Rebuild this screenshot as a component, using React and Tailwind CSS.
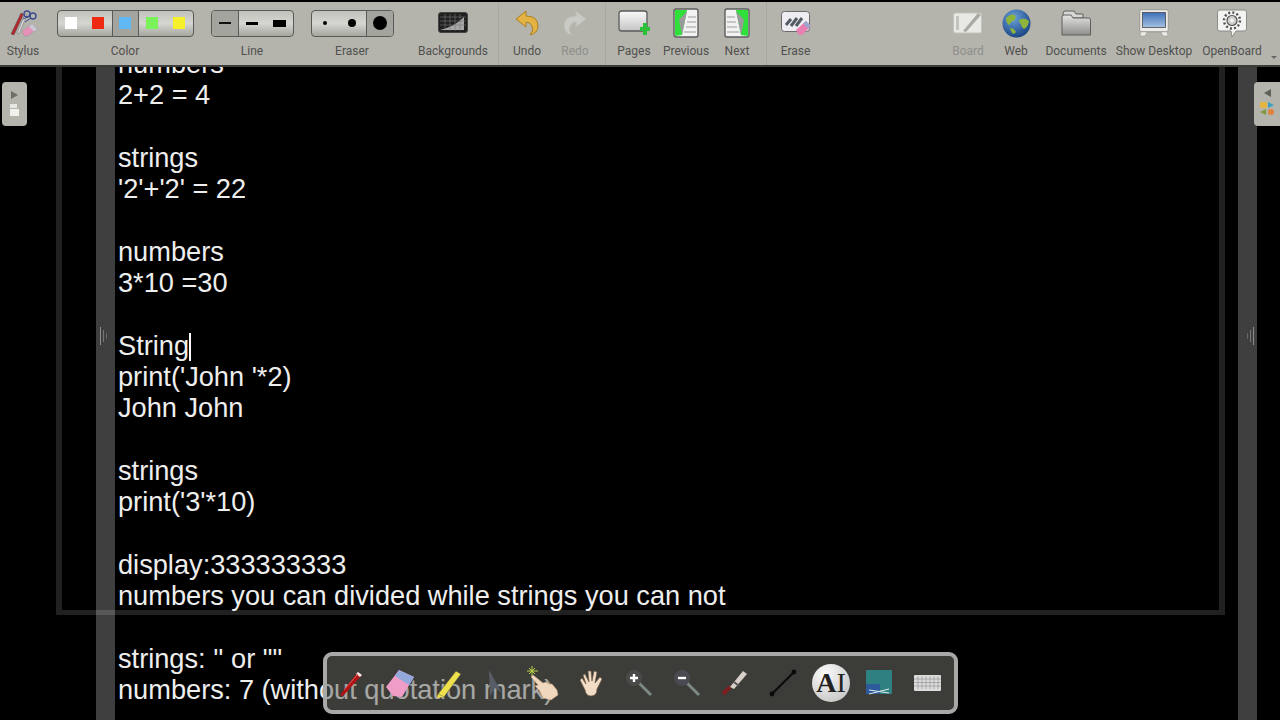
const lines = [
  "numbers", "2+2 = 4", "", "strings", "'2'+'2' = 22", "", "numbers", "3*10 =30", "",
  "String", "print('John '*2)", "John John", "", "strings", "print('3'*10)", "",
  "display:333333333", "numbers you can divided while strings you can not", "",
  "strings: '' or \"\"", "numbers: 7 (without quotation mark)",
];

function StylusIcon() {
  return (
    <svg width="30" height="30" viewBox="0 0 30 30">
      <path d="M3 26 L13 5 L15.5 6.2 L6 27 Z" fill="#b3262a" stroke="#555" strokeWidth="0.5" />
      <path d="M9 25 L17 6 L19 7 L11 26 Z" fill="#d8d8d8" stroke="#666" strokeWidth="0.5" />
      <circle cx="19" cy="6" r="3" fill="none" stroke="#3c4d8c" strokeWidth="1.4" />
      <circle cx="25" cy="8" r="3" fill="none" stroke="#3c4d8c" strokeWidth="1.4" />
      <path d="M15 11 L21 8 M17 14 L23 10" stroke="#3c4d8c" strokeWidth="1" />
      <path d="M14 23 L24 16 L29 21 L20 28 L16 28 Z" fill="#e591b8" stroke="#999" strokeWidth="0.5" />
      <path d="M24 16 L29 21 L26 23.5 L21 18.5 Z" fill="#c9c9d6" />
    </svg>
  );
}

function BackgroundsIcon() {
  return (
    <svg width="30" height="22" viewBox="0 0 30 22">
      <rect x="0.5" y="0.5" width="29" height="20" rx="2.5" fill="#202020" stroke="#444" />
      <path d="M2 18 L26 18 L26 5 Q18 14 2 18 Z" fill="#a8a8a8" />
      <path d="M2 5 H28 M2 9 H28 M2 13 H28 M7 2 V19 M12 2 V19 M17 2 V19 M22 2 V19" stroke="#777" strokeWidth="0.6" />
    </svg>
  );
}

function ArrowIcon({ fill, stroke, flip }) {
  return (
    <svg width="24" height="26" viewBox="0 0 24 26" className={flip ? "-scale-x-100" : ""}>
      <path d="M1 9 L11 1 L11 6 Q23 6 23 16 Q23 23 15 25 Q19 21 17 16 Q15 12 11 12 L11 17 Z" fill={fill} stroke={stroke} strokeWidth="1" strokeLinejoin="round" />
    </svg>
  );
}

function PagesIcon() {
  return (
    <svg width="32" height="26" viewBox="0 0 32 26">
      <defs>
        <linearGradient id="pg" x1="0" x2="0" y1="0" y2="1">
          <stop offset="0" stopColor="#fafafa" />
          <stop offset="1" stopColor="#c4c4c4" />
        </linearGradient>
      </defs>
      <rect x="1" y="1" width="28" height="20" rx="2.5" fill="url(#pg)" stroke="#5a5a5a" strokeWidth="1.3" />
      <path d="M25 13 h4 v4 h3 v4 h-3 v4 h-4 v-4 h-3 v-4 h3 Z" fill="#2bc23a" />
    </svg>
  );
}

function PageTurnIcon({ flip }) {
  return (
    <svg width="26" height="30" viewBox="0 0 26 30" className={flip ? "-scale-x-100" : ""}>
      <rect x="1" y="1" width="24" height="28" rx="2" fill="#f2f2f2" stroke="#5c5c5c" strokeWidth="1.4" />
      <path d="M2 2 H14 L9 27 L2 28 Z" fill="#2fe03a" />
      <path d="M14 3 L9 27 L6 12 Z" fill="#9a9a9a" />
      <path d="M15 9 H23 M14 14 H23 M13 19 H23 M11 24 H23" stroke="#9b9b9b" strokeWidth="1" />
    </svg>
  );
}

function EraseIcon() {
  return (
    <svg width="30" height="24" viewBox="0 0 30 24">
      <rect x="0.5" y="0.5" width="28" height="20" rx="3" fill="#eeeef2" stroke="#6a6a6a" />
      <path d="M5 14 L10 8 M10 15 L16 7 M15 15 L21 7" stroke="#555c66" strokeWidth="3" />
      <path d="M15 19 L25 10 L30 15 L21 24 L18 24 Z" fill="#e77fb0" />
      <path d="M25 10 L30 15 L27 17.5 L22 12.5 Z" fill="#9aa7cf" />
    </svg>
  );
}

function BoardIcon() {
  return (
    <svg width="30" height="22" viewBox="0 0 30 22">
      <rect x="0.5" y="1" width="28" height="20" rx="2" fill="#e8e8e4" stroke="#c4c4be" />
      <rect x="3" y="4" width="3" height="14" fill="#c4c4be" />
      <path d="M10 19 L25 1 L28 3 L13 20 Z" fill="#a9a9a4" />
    </svg>
  );
}

function GlobeIcon() {
  return (
    <svg width="29" height="29" viewBox="0 0 29 29">
      <defs>
        <radialGradient id="gl" cx="0.4" cy="0.3" r="0.8">
          <stop offset="0" stopColor="#6aa2dc" />
          <stop offset="1" stopColor="#123a78" />
        </radialGradient>
      </defs>
      <circle cx="14.5" cy="14.5" r="14" fill="url(#gl)" />
      <path d="M4 9 Q9 4 13 6 Q15 10 11 12 Q8 13 8 16 Q4 15 4 9 Z M17 11 Q23 8 27 12 Q26 18 22 20 Q19 18 19 15 Q17 14 17 11 Z M8 19 Q12 19 14 23 Q12 26 10 24 Z" fill="#8fb43c" />
    </svg>
  );
}

function FolderIcon() {
  return (
    <svg width="30" height="26" viewBox="0 0 30 26">
      <defs>
        <linearGradient id="fd" x1="0" x2="0" y1="0" y2="1">
          <stop offset="0" stopColor="#e4e4e2" />
          <stop offset="1" stopColor="#8e8e8c" />
        </linearGradient>
      </defs>
      <path d="M2 4 Q2 1 4 1 H13 L15 4 H22 V8 H2 Z" fill="#d6d6d4" stroke="#5e5e5e" />
      <path d="M1 25 V7 Q1 5 3 5 H10 L12 8 H28 Q29.5 8 29.5 10 V25 Z" fill="url(#fd)" stroke="#5e5e5e" />
    </svg>
  );
}

function DesktopIcon() {
  return (
    <svg width="30" height="28" viewBox="0 0 30 28">
      <defs>
        <linearGradient id="ds" x1="0" x2="0" y1="0" y2="1">
          <stop offset="0" stopColor="#3d70b8" />
          <stop offset="1" stopColor="#a5c2e2" />
        </linearGradient>
      </defs>
      <path d="M2 22 L1 27 H6 L8 23 H22 L24 27 H29 L28 22 Z" fill="#ecebe8" stroke="#9a9a96" strokeWidth="0.6" />
      <rect x="0.7" y="0.7" width="28.6" height="22" rx="2" fill="#ecebe8" stroke="#9a9a96" />
      <rect x="3.5" y="3.5" width="23" height="15" fill="url(#ds)" stroke="#4a4a4a" strokeWidth="0.8" />
    </svg>
  );
}

function OpenBoardIcon() {
  return (
    <svg width="30" height="29" viewBox="0 0 30 29">
      <path d="M3 1 H27 Q29.5 1 29.5 3 V20 Q29.5 22 27 22 H19 L15 28 L14 22 H3 Q0.5 22 0.5 20 V3 Q0.5 1 3 1 Z" fill="#f3f3f1" stroke="#8b8b87" />
      <circle cx="15" cy="11.5" r="5" fill="#cfcfcd" stroke="#555" strokeWidth="1.2" />
      <circle cx="15" cy="11.5" r="8" fill="none" stroke="#555" strokeWidth="2.4" strokeDasharray="2 2.2" />
      <circle cx="15" cy="11.5" r="2" fill="#f3f3f1" />
    </svg>
  );
}

function ToolItem({ label, width, muted, children }) {
  return (
    <div className="flex flex-col items-center shrink-0 pt-[1px]" style={{ width }}>
      <div className="h-[40px] flex items-center justify-center">{children}</div>
      <span className={"text-[12px] leading-[16px] whitespace-nowrap " + (muted ? "text-[#8f8f8b]" : "text-[#50504e]")}>{label}</span>
    </div>
  );
}

function Segmented({ cells, selected }) {
  return (
    <div className="flex h-[27px] rounded-[4px] border border-[#5a5a58] overflow-hidden bg-gradient-to-b from-[#c2c2bc] via-[#d6d6d0] to-[#a6a6a0]">
      {cells.map((cell, i) => (
        <div
          key={i}
          className={"w-[27px] flex items-center justify-center " +
            (selected === i ? "bg-[#a4a49e] " : "") +
            (selected === i && i > 0 ? "border-l border-[#5a5a58] " : "") +
            (selected === i && i < cells.length - 1 ? "border-r border-[#5a5a58]" : "")}
        >
          {cell}
        </div>
      ))}
    </div>
  );
}

function Toolbar() {
  return (
    <div className="mt-[2px] h-[65px] shrink-0 flex bg-[#b4b4ad] border-b-2 border-[#3c3c3a] relative">
      <ToolItem label="Stylus" width={46}><StylusIcon /></ToolItem>
      <ToolItem label="Color" width={158}>
        <Segmented selected={2} cells={[
          <div className="w-[12px] h-[12px] bg-white" />,
          <div className="w-[12px] h-[12px] bg-[#ef2a12]" />,
          <div className="w-[12px] h-[12px] bg-[#62b8f2]" />,
          <div className="w-[12px] h-[12px] bg-[#7cf25a]" />,
          <div className="w-[12px] h-[12px] bg-[#f6f02a]" />,
        ]} />
      </ToolItem>
      <ToolItem label="Line" width={96}>
        <Segmented selected={0} cells={[
          <div className="w-[12px] h-[2px] bg-[#111]" />,
          <div className="w-[12px] h-[3px] bg-black" />,
          <div className="w-[13px] h-[7px] bg-black" />,
        ]} />
      </ToolItem>
      <ToolItem label="Eraser" width={104}>
        <Segmented selected={2} cells={[
          <div className="w-[4px] h-[4px] rounded-full bg-black" />,
          <div className="w-[8px] h-[8px] rounded-full bg-black" />,
          <div className="w-[14px] h-[14px] rounded-full bg-black" />,
        ]} />
      </ToolItem>
      <div className="w-[4px]" />
      <ToolItem label="Backgrounds" width={90}><BackgroundsIcon /></ToolItem>
      <div className="h-full border-l border-dotted border-[#9c9c96]" />
      <ToolItem label="Undo" width={56}><ArrowIcon fill="#e3b343" stroke="#a87f22" /></ToolItem>
      <ToolItem label="Redo" width={40} muted><ArrowIcon fill="#c9c9c5" stroke="#bdbdb8" flip /></ToolItem>
      <div className="w-[10px]" />
      <div className="h-full border-l border-dotted border-[#9c9c96]" />
      <ToolItem label="Pages" width={56}><PagesIcon /></ToolItem>
      <ToolItem label="Previous" width={48}><PageTurnIcon /></ToolItem>
      <ToolItem label="Next" width={54}><PageTurnIcon flip /></ToolItem>
      <div className="w-[2px]" />
      <div className="h-full border-l border-dotted border-[#9c9c96]" />
      <ToolItem label="Erase" width={57}><EraseIcon /></ToolItem>
      <div className="flex-1" />
      <ToolItem label="Board" width={48} muted><BoardIcon /></ToolItem>
      <ToolItem label="Web" width={48}><GlobeIcon /></ToolItem>
      <ToolItem label="Documents" width={72}><FolderIcon /></ToolItem>
      <ToolItem label="Show Desktop" width={84}><DesktopIcon /></ToolItem>
      <ToolItem label="OpenBoard" width={72}><OpenBoardIcon /></ToolItem>
      <div className="w-[12px] flex items-end justify-center pb-[6px]">
        <div className="w-0 h-0 border-x-[3px] border-x-transparent border-t-[3px] border-t-[#666]" />
      </div>
    </div>
  );
}

function Grip({ className }) {
  return (
    <div className={"absolute top-[260px] flex items-center gap-[2px] " + className}>
      <div className="w-[1px] h-[18px] bg-[#8c8c8c]" />
      <div className="w-[1px] h-[12px] bg-[#777]" />
      <div className="w-[1px] h-[6px] bg-[#666]" />
    </div>
  );
}

function LeftTab() {
  return (
    <div className="absolute left-[2px] top-[15px] w-[25px] h-[44px] rounded-[4px] bg-[#b4b4ad] flex flex-col items-center pt-[9px] gap-[5px]">
      <div className="w-0 h-0 border-y-[4px] border-y-transparent border-l-[7px] border-l-[#6d6d69]" />
      <div className="flex flex-col gap-[1px]">
        <div className="w-[7px] h-[4px] bg-[#e6e6e2]" />
        <div className="w-[9px] h-[7px] bg-[#f0f0ec]" />
      </div>
    </div>
  );
}

function RightTab() {
  return (
    <div className="absolute right-0 top-[15px] w-[26px] h-[44px] rounded-l-[4px] bg-[#b4b4ad] flex flex-col items-center pt-[7px] gap-[5px]">
      <div className="w-0 h-0 border-y-[4px] border-y-transparent border-r-[7px] border-r-[#5f5f5b]" />
      <div className="grid grid-cols-2 gap-[1px]">
        <div className="w-[7px] h-[6px] bg-[#e2b640]" />
        <div className="w-0 h-0 border-y-[3px] border-y-transparent border-l-[6px] border-l-[#3d9fbf]" />
        <div className="w-0 h-0 border-y-[3px] border-y-transparent border-r-[6px] border-r-[#7f9a3c]" />
        <div className="w-[6px] h-[6px] rounded-full bg-[#e0823a]" />
      </div>
    </div>
  );
}

function PointerHand() {
  return (
    <svg width="34" height="34" viewBox="0 0 34 34">
      <path d="M3 0 V11 M-2 5 H9 M0 2 L6 8 M6 2 L0 8" transform="translate(3 0)" stroke="#bcd24a" strokeWidth="1" />
      <path d="M7 9 L17 17 L20 16 L23 18 L26 18 L31 24 L32 29 L25 34 L17 32 L13 24 L9 20 L12 19 L5 11 Z" fill="#f1d7bd" stroke="#b89b80" strokeWidth="0.6" />
    </svg>
  );
}

function OpenHand() {
  return (
    <svg width="28" height="30" viewBox="0 0 28 30">
      <path d="M8 6 L12 14 L11 3 L14 3 L15 13 L17 3 L20 4 L18 15 L23 9 L25 11 L20 21 Q20 28 14 28 Q9 28 8 22 L3 12 L5 10 L9 16 L6 7 Z" fill="#f3dcc5" stroke="#6d5a48" strokeWidth="0.7" />
    </svg>
  );
}

function dockIcons() {
  return [
    <svg width="26" height="28" viewBox="0 0 26 28"><path d="M2 26 L20 3 L24 6 L5 27 Z" fill="#b01414" /><path d="M20 3 L24 6 L22 8 L18 5 Z" fill="#eeeeee" /><path d="M6 21 L20 5" stroke="#ee5555" strokeWidth="1" /></svg>,
    <svg width="30" height="30" viewBox="0 0 30 30" className="ml-[2px]"><path d="M1 19 L14 2 L29 9 L17 29 L8 28 Z" fill="#ef9cc6" /><path d="M14 2 L29 9 L24 17 L10 8 Z" fill="#93a9dc" /></svg>,
    <svg width="26" height="30" viewBox="0 0 26 30" className="ml-[4px]"><path d="M2 26 L20 3 L25 6 L8 29 Z" fill="#eee04a" stroke="#444" strokeWidth="0.6" /><path d="M2 26 L8 29 L1 30 Z" fill="#eee04a" /></svg>,
    <svg width="18" height="28" viewBox="0 0 18 28"><path d="M3 1 L16 24 L9 19 L4 27 Z" fill="#575c66" /></svg>,
    <PointerHand />,
    <OpenHand />,
    <svg width="30" height="30" viewBox="0 0 30 30"><path d="M15 15 L27 27" stroke="#7a8a82" strokeWidth="3" /><circle cx="10" cy="10" r="8" fill="#4a4a4a" /><path d="M6 10 H14 M10 6 V14" stroke="#fff" strokeWidth="2.4" /></svg>,
    <svg width="30" height="30" viewBox="0 0 30 30"><path d="M15 15 L27 27" stroke="#7a8a82" strokeWidth="3" /><circle cx="10" cy="10" r="8" fill="#4a4a52" /><path d="M6 10 H14" stroke="#fff" strokeWidth="2.4" /></svg>,
    <svg width="28" height="30" viewBox="0 0 28 30"><path d="M2 26 L9 19" stroke="#7c1f1f" strokeWidth="4" /><path d="M9 19 L22 3 L26 6 L13 21 Z" fill="#d8d0c8" /><path d="M13 14 L18 18" stroke="#555" strokeWidth="2" /></svg>,
    <svg width="28" height="28" viewBox="0 0 28 28"><path d="M3 25 L25 3" stroke="#0a0a0a" strokeWidth="2" /><circle cx="3" cy="25" r="2.4" fill="#0a0a0a" /><circle cx="25" cy="3" r="2.4" fill="#0a0a0a" /></svg>,
    <div className="w-[38px] h-[38px] rounded-full bg-[radial-gradient(circle_at_35%_25%,#fafafa,#bcbcbc)] flex items-center justify-center text-[#222] text-[28px] leading-none [font-family:'Liberation_Serif',serif]"><span className="font-bold">A</span>I</div>,
    <svg width="28" height="28" viewBox="0 0 28 28">
      <rect x="1" y="1" width="26" height="24" fill="#2f8080" />
      <rect x="1" y="15" width="14" height="10" fill="#2d5a9a" />
      <path d="M4 25 L24 20 M4 21 L24 24" stroke="#dfe8e8" strokeWidth="1" />
    </svg>,
    <svg width="27" height="16" viewBox="0 0 27 16">
      <rect width="27" height="16" rx="1" fill="#dcdcdc" />
      <path d="M0 4 H27 M0 7.5 H27 M0 11 H27 M4 1 V14 M8 1 V14 M12 1 V14 M16 1 V14 M20 1 V14 M24 1 V14" stroke="#8e8e8e" strokeWidth="0.6" />
    </svg>,
  ];
}

function Dock() {
  return (
    <div className="absolute left-[323px] top-[585px] w-[635px] h-[62px] rounded-[9px] border-[4px] border-[#a8a8a6] bg-[#6e6e67]/55 flex items-center">
      {dockIcons().map((icon, i) => (
        <div key={i} className="w-[48px] h-[48px] flex items-center justify-center shrink-0">
          {icon}
        </div>
      ))}
    </div>
  );
}

export default function App() {
  return (
    <div className="w-[1280px] h-[720px] overflow-hidden bg-black flex flex-col [font-family:Roboto,'Liberation_Sans',sans-serif]">
      <Toolbar />
      <div className="flex-1 min-h-0 relative flex">
        <div className="w-[96px] shrink-0" />
        <div className="w-[19px] shrink-0 bg-[#3f3f3f]" />
        <div className="flex-1 pl-[3px] overflow-hidden">
          <div className="-mt-[19px] text-[#eeeeee] text-[27.2px] leading-[31.3px] [font-family:'Liberation_Sans',sans-serif] whitespace-pre">
            {lines.map((line, i) => (
              <div key={i} className="h-[31.3px]">
                {line}
                {line === "String" && <span className="inline-block w-[2px] h-[28px] bg-white align-[-6px]" />}
              </div>
            ))}
          </div>
        </div>
        <div className="w-[19px] shrink-0 bg-[#3f3f3f]" />
        <div className="w-[23px] shrink-0" />
        <div className="absolute left-[56px] top-0 w-[1169px] h-[548px] border-x-[6px] border-b-[5px] border-white/[0.13]" />
        <Grip className="left-[100px]" />
        <Grip className="left-[1247px] flex-row-reverse" />
        <LeftTab />
        <RightTab />
        <Dock />
      </div>
    </div>
  );
}
